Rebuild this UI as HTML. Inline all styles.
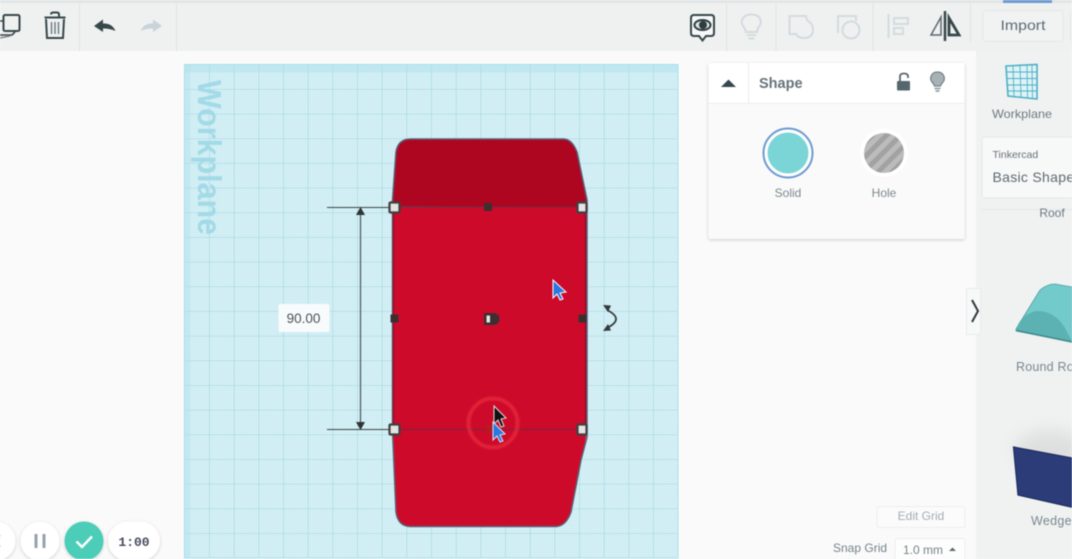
<!DOCTYPE html>
<html><head><meta charset="utf-8">
<style>
html,body{margin:0;padding:0;width:1072px;height:559px;overflow:hidden;background:#fafafa}
#s{position:absolute;left:0;top:0;filter:blur(.55px)}
text{font-family:"Liberation Sans",sans-serif}
</style></head><body>
<svg id="s" width="1072" height="559" viewBox="0 0 1072 559" xmlns="http://www.w3.org/2000/svg">
<defs>
<pattern id="fine" x="184.500" y="64.500" width="2.467" height="2.467" patternUnits="userSpaceOnUse">
<path d="M0 0H2.467M0 0V2.467" stroke="#b4e2ea" stroke-width=".4" fill="none"/>
</pattern>
<pattern id="major" x="184.500" y="64.500" width="24.67" height="24.67" patternUnits="userSpaceOnUse">
<path d="M0 0H24.67M0 0V24.67" stroke="#9dd2df" stroke-width="1.100" fill="none"/>
</pattern>
<pattern id="hatch" width="10" height="10" patternUnits="userSpaceOnUse" patternTransform="rotate(-45)">
<rect width="10" height="10" fill="#bcbcbc"/><rect width="10" height="5" fill="#a2a2a2"/>
</pattern>
<filter id="sh" x="-20%" y="-20%" width="140%" height="140%"><feDropShadow dx="0" dy="1" stdDeviation="1.500" flood-color="#000" flood-opacity=".18"/></filter>
<filter id="bl" x="-50%" y="-50%" width="200%" height="200%"><feGaussianBlur stdDeviation="8"/></filter>
<filter id="gl" x="-30%" y="-30%" width="160%" height="160%"><feGaussianBlur stdDeviation="1"/></filter>
</defs>
<!-- page -->
<rect width="1072" height="559" fill="#fafafa"/>
<!-- toolbar -->
<rect y="0" width="1072" height="51" fill="#eff1f1"/>
<rect y="0" width="1072" height="3" fill="#e2e5e6"/>
<rect x="1003" y="0" width="49" height="3" fill="#6d9ad0"/>
<g stroke="#dfe3e5" stroke-width="1">
<path d="M79.500 3V51M176.500 3V51M726.500 3V51M776 3V51M873 3V51M970.500 3V42"/>
</g>
<!-- duplicate -->
<g fill="none" stroke="#37474a" stroke-width="2">
<rect x="3.500" y="15" width="16" height="16" rx="1.500"/>
<path d="M3 21H0M0 35H12L15 32" stroke-width="1.600"/>
<path d="M0 38L10 36" stroke-width="1.200" stroke="#778"/>
</g>
<!-- trash -->
<g fill="none" stroke="#37474a" stroke-width="2">
<path d="M46 19L47 38H63L64 19M44.500 17.500H65.500"/>
<path d="M51 14.500Q51 12.500 53 12.500H57Q59 12.500 59 14.500V16.500"/>
<path d="M51.500 22V34M55 22V34M58.500 22V34" stroke-width="1.300" stroke="#607074"/>
</g>
<!-- undo/redo -->
<path d="M94 26L103 19.500V23.500Q112 23 115.500 31Q110 28.500 103 28.500V32Z" fill="#37474a"/>
<path d="M162 26L153 19.500V23.500Q144 23 140.500 31Q146 28.500 153 28.500V32Z" fill="#c9d3da"/>
<!-- eye -->
<path d="M694 15H711Q714 15 714 18V33Q714 36 711 36H706L702.500 40.500L699 36H694Q691 36 691 33V18Q691 15 694 15Z" fill="#f6f8f8" stroke="#37474a" stroke-width="2"/>
<ellipse cx="702.500" cy="25" rx="8" ry="5" fill="#dfe5e5" stroke="#2f3d40" stroke-width="2"/>
<circle cx="703" cy="25" r="4" fill="#2f3d40"/>
<!-- bulb -->
<g fill="none" stroke="#d2dbdf" stroke-width="2">
<path d="M746 32Q745 28 743 26Q741 23 742 20Q744 14.500 751.500 14.500Q759 14.500 760.500 20Q761.500 23 759.500 26Q757.500 28 757 32Z"/>
<path d="M747 35H756M748.500 38.500H754.500"/>
</g>
<!-- group -->
<path d="M789.500 16H806Q806 20 810 22.500Q813 25 813 29.500Q813 38 804 38Q798 38 796 34H789.500Z" fill="none" stroke="#d2dbdf" stroke-width="2"/>
<!-- ungroup -->
<g fill="none" stroke="#d2dbdf" stroke-width="2"><path d="M839 32H838V16H856V21"/><circle cx="851" cy="30" r="8.500"/></g>
<!-- align -->
<g fill="none" stroke="#d2dbdf" stroke-width="2"><path d="M888.500 14V38"/><rect x="894" y="18" width="14" height="6"/><rect x="894" y="28" width="9" height="6"/></g>
<!-- mirror -->
<path d="M945 11V41" stroke="#37474a" stroke-width="2.500"/>
<path d="M941 35V17L931 35Z" fill="none" stroke="#5a6a6e" stroke-width="1.500"/>
<path d="M949 18V35H959Z" fill="none" stroke="#37474a" stroke-width="2.800"/>
<!-- import -->
<rect x="983" y="10.500" width="80" height="31" rx="3" fill="#f1f3f3" stroke="#e3e6e8"/>
<rect x="1070.500" y="10.500" width="10" height="31" rx="3" fill="#f1f3f3" stroke="#e3e6e8"/>
<text x="1023" y="30" font-size="14" fill="#5d6a70" text-anchor="middle" textLength="45" lengthAdjust="spacingAndGlyphs">Import</text>

<!-- right sidebar -->
<rect x="976" y="51" width="96" height="508" fill="#f0f2f2"/>
<g>
<path d="M1006 66L1037 64.500L1037 99L1008 96Z" fill="#dff3f6" stroke="#4eb0c6" stroke-width="1.600"/>
<path d="M1013 65.700L1014 97M1020 65.400L1021 97.600M1027 65L1027.500 98.200M1032 64.800L1032.500 98.600M1006.500 72H1037M1007 78.500H1037M1007.300 85H1037M1007.600 91H1037" stroke="#4eb0c6" stroke-width=".9" fill="none"/>
</g>
<text x="1022" y="118" font-size="12" fill="#6c7a80" text-anchor="middle" textLength="60" lengthAdjust="spacingAndGlyphs">Workplane</text>
<rect x="982" y="137" width="100" height="61" rx="2" fill="#f7f8f8" stroke="#e4e7e8"/>
<text x="992.500" y="158" font-size="10.500" fill="#667379">Tinkercad</text>
<text x="992.500" y="182" font-size="14" fill="#5d6a70" letter-spacing=".3">Basic Shapes</text>
<path d="M981 209.500H1072" stroke="#e2e5e6"/>
<text x="1052" y="217" font-size="12" fill="#6c7a80" text-anchor="middle">Roof</text>
<!-- round roof -->
<path d="M1016 329L1040 290Q1047 284 1055 284L1072 287V342L1016 331Z" fill="#73cacb" stroke="#4f9ea2" stroke-width=".8"/>
<path d="M1016 330Q1020 315 1036 311Q1058 310 1069 336L1072 341.500Z" fill="#5cb2b3"/>
<path d="M1016.500 330.500L1072 342" stroke="#3f8b90" stroke-width="1.600"/>
<text x="1016" y="371" font-size="12.500" fill="#7b878d" letter-spacing=".2">Round Roof</text>
<!-- wedge -->
<ellipse cx="1050" cy="450" rx="35" ry="20" fill="#c8c8c8" opacity=".45" filter="url(#bl)"/>
<path d="M1013.500 447L1072 458V507L1071 507L1018 495Z" fill="#2b3c79" stroke="#1e2d60" stroke-width="1.200"/>
<text x="1031" y="525" font-size="12.500" fill="#7b878d" letter-spacing=".3">Wedge</text>
<!-- collapse tab -->
<rect x="966.500" y="288.500" width="14" height="46" fill="#f7f8f8" stroke="#e8eaeb"/>
<path d="M972 300L978 311L972 322" fill="none" stroke="#2f3a3d" stroke-width="2"/>

<!-- workplane grid -->
<rect x="184.500" y="64.500" width="493.500" height="493.500" fill="#d6f0f5"/>
<rect x="184.500" y="64.500" width="493.500" height="493.500" fill="url(#fine)"/>
<rect x="184.500" y="64.500" width="493.500" height="493.500" fill="url(#major)"/>
<rect x="184.500" y="64.500" width="493.500" height="8" fill="#a8dfec" opacity=".4"/>
<rect x="184.500" y="64.500" width="6" height="493.500" fill="#a8dfec" opacity=".35"/>
<rect x="184.500" y="64.500" width="493.500" height="493.500" fill="none" stroke="#a9dfe9" stroke-width="1"/>
<text transform="translate(198,80) rotate(90)" font-size="33" font-weight="bold" fill="#a3dae7" textLength="155" lengthAdjust="spacingAndGlyphs">Workplane</text>

<!-- shape -->
<path d="M392 207L396 152Q398 139.500 410 139H564Q572 139.500 577 152L587 200V208Z" fill="#ae0620" stroke="#5a5f78" stroke-width="1.500"/>
<path d="M393 207H587V430Q585 445 581 460L571 512Q566 526 556 526.500H410Q398 526 396 512L393 450Z" fill="#ce0a2a"/>
<path d="M587 207V437L581 460L571 512Q566 526 556 526.500H410Q398 526 396 512L392.500 430V207" fill="none" stroke="#5a5f78" stroke-width="1.500"/>
<path d="M393.500 207V429M585.500 207V429" stroke="#96102e" stroke-width="1.600"/>
<path d="M394 207H582M394 429.500H582" stroke="#5e3048" stroke-width="1.300" stroke-dasharray="2 1"/>

<!-- dimension -->
<g stroke="#3a4244" fill="none">
<path d="M327 207.500H390M327 429.500H390" stroke-width="1"/>
<path d="M360.500 212V424" stroke-width="1.200" stroke="#4a5558"/>
</g>
<path d="M360.500 207L365 215H356Z M360.500 430L365 422H356Z" fill="#2e3436"/>
<rect x="278.500" y="304" width="51" height="28" rx="2" fill="#f8fbfb"/>
<text x="303.500" y="323" font-size="13.500" fill="#4a5254" text-anchor="middle">90.00</text>

<!-- handles -->
<g fill="#e4e4e4" stroke="#404040" stroke-width="2.200">
<rect x="389.500" y="202.500" width="10" height="10" rx="1"/>
<rect x="577.500" y="202.500" width="9" height="10" rx="1"/>
<rect x="389.500" y="424.500" width="10" height="10" rx="1"/>
<rect x="577.500" y="424.500" width="9" height="10" rx="1"/>
</g>
<g fill="#3a3030">
<rect x="484" y="203" width="8" height="8"/>
<rect x="390.500" y="314.500" width="8" height="8"/>
<rect x="578.500" y="314.500" width="8" height="8"/>
<circle cx="493.500" cy="319" r="6"/>
<rect x="484" y="313" width="8" height="12" rx="1"/>
</g>
<rect x="486.500" y="315.500" width="3.500" height="7" fill="#e5e5e5"/>

<!-- rotation arrow -->
<path d="M607 310Q625 319 607 328" fill="none" stroke="#333a3c" stroke-width="1.800"/>
<path d="M603 305L611 305.500L608 312Z M603 331L611 330.500L608 324Z" fill="#333a3c"/>

<!-- click ring -->
<circle cx="493" cy="423" r="24.500" fill="none" stroke="#ea3343" stroke-width="3.500" opacity=".75" filter="url(#gl)"/>
<rect x="487" y="425" width="6" height="8" fill="#b02020" opacity=".8"/>
<!-- cursors -->
<path d="M494 406V424L498 420L501 427L504 426L501 419L506 418Z" fill="#111" stroke="#e8dada" stroke-width="1"/>
<path d="M493 422V440L497 436L500 442L503 441L500 435L505 434Z" fill="#2a78e0" stroke="#d8e2f4" stroke-width="1"/>
<path d="M553 280V298L557 294L560 300L563 299L560 293L566 292Z" fill="#2a78e0" stroke="#fff" stroke-width="1"/>

<!-- inspector -->
<g filter="url(#sh)"><rect x="708.500" y="63" width="256" height="176" rx="2" fill="#fafafa"/></g>
<rect x="708.500" y="63" width="256" height="41" rx="2" fill="#fff"/>
<path d="M708.500 103.500H964.500" stroke="#ebeded"/>
<path d="M748.500 63V103" stroke="#ebeded"/>
<path d="M721 87L728.500 79.500L736 87Z" fill="#37474f"/>
<text x="759" y="88" font-size="14.500" font-weight="bold" fill="#65737b">Shape</text>
<rect x="897" y="81" width="13" height="9.500" rx="1" fill="#56666e"/>
<path d="M900 81V76.500Q900 73.500 904 73.500Q908 73.500 908 76.500V78" fill="none" stroke="#56666e" stroke-width="1.800"/>
<path d="M934.500 86Q934 84 932 82Q930 79.500 931 76.500Q932.500 72 937.500 72Q942.500 72 944 76.500Q945 79.500 943 82Q941 84 940.500 86Z" fill="#a8b2b6" stroke="#76848a" stroke-width="1.300"/>
<path d="M934.500 88.500H940.500M935.500 91H939.500" stroke="#8a969c" stroke-width="1.500"/>
<!-- solid/hole -->
<circle cx="788" cy="153" r="24.500" fill="#fff" stroke="#6d9ad0" stroke-width="2"/>
<circle cx="788" cy="153" r="20.500" fill="#7bd5d7"/>
<text x="788" y="197" font-size="12" fill="#7d888e" text-anchor="middle">Solid</text>
<circle cx="884" cy="153" r="24" fill="#fff"/>
<circle cx="884" cy="153" r="20" fill="url(#hatch)"/>
<text x="884" y="197" font-size="12" fill="#7d888e" text-anchor="middle">Hole</text>

<!-- bottom right -->
<rect x="877" y="506.500" width="88" height="21" rx="2" fill="#fbfbfb" stroke="#eceeee"/>
<text x="921" y="520" font-size="12" fill="#a3adb2" text-anchor="middle">Edit Grid</text>
<text x="833" y="552" font-size="12" fill="#76848a">Snap Grid</text>
<rect x="895" y="538.500" width="70" height="26" rx="2" fill="#fdfdfd" stroke="#eceeee"/>
<text x="903" y="554" font-size="12" fill="#76848a">1.0 mm</text>
<path d="M949 551L952.500 547.500L956 551Z" fill="#5b6a72"/>

<!-- timer controls -->
<g filter="url(#sh)">
<circle cx="-4" cy="541" r="19.500" fill="#fff"/>
<circle cx="40" cy="541" r="19.500" fill="#fff"/>
<circle cx="84" cy="541" r="19.500" fill="#4ccdb8"/>
<rect x="108" y="521.500" width="52" height="39" rx="19.500" fill="#fff"/>
</g>
<path d="M0 535L-4 541M0 547L-4 541" stroke="#ee8a90" stroke-width="2"/>
<path d="M36 534V548M44 534V548" stroke="#95a2ae" stroke-width="3"/>
<path d="M76.500 541.500L82 547L92 536.500" fill="none" stroke="#fff" stroke-width="2.500"/>
<text x="134" y="546" font-size="13" font-weight="bold" fill="#454a60" text-anchor="middle" style="font-family:'Liberation Mono',monospace">1:00</text>
</svg>
</body></html>
